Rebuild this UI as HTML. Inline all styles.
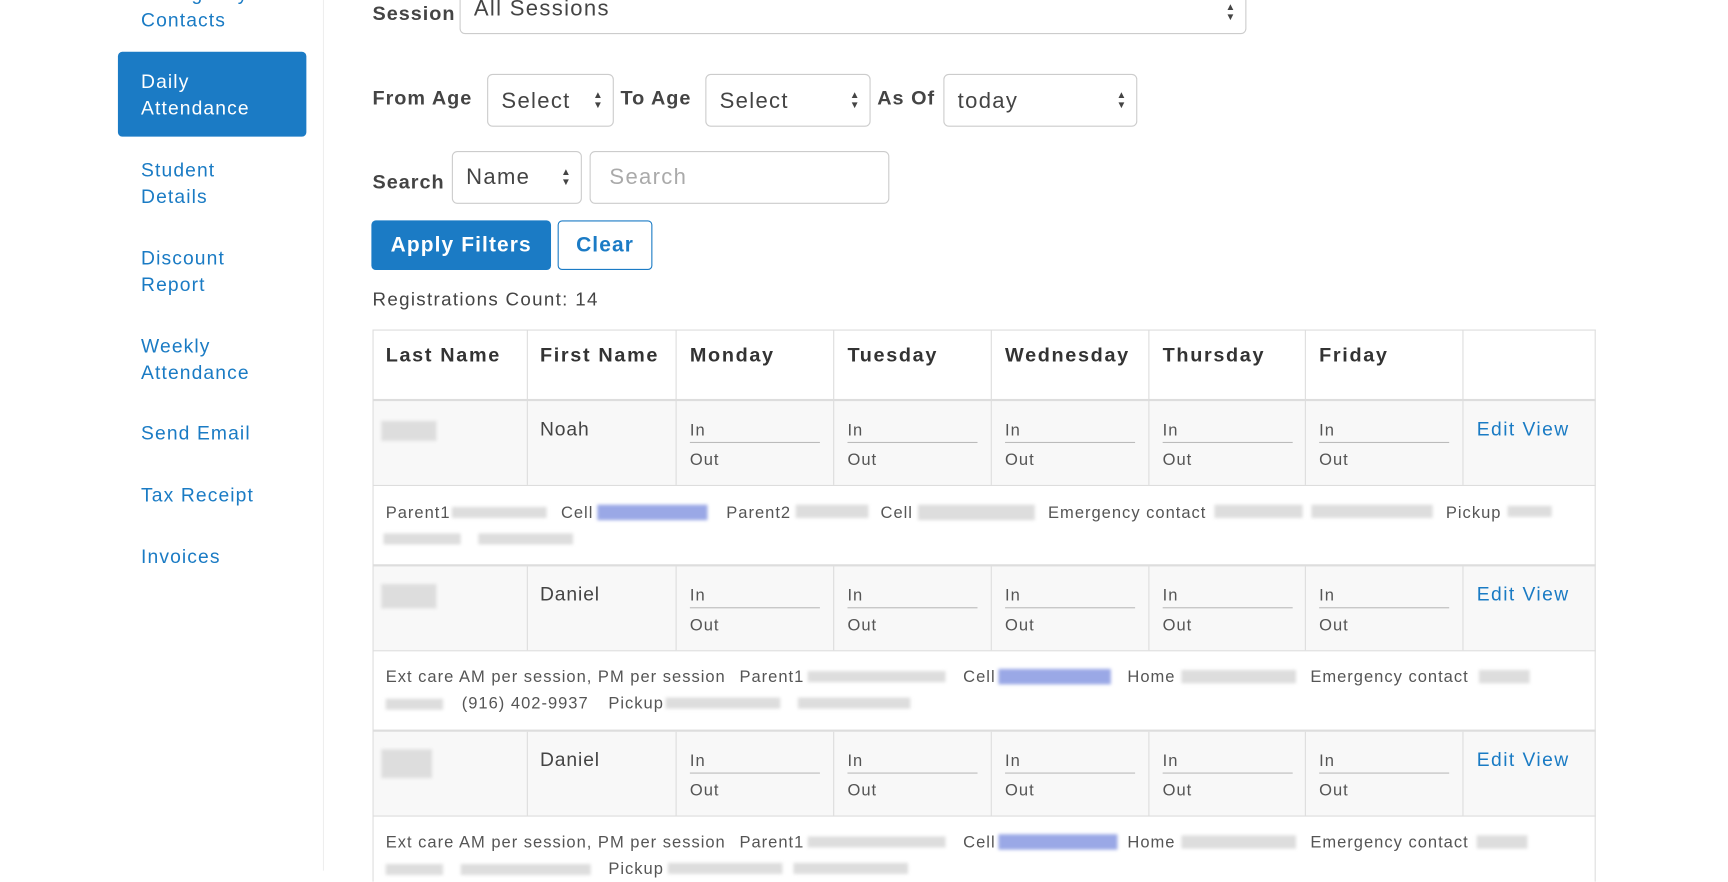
<!DOCTYPE html>
<html><head><meta charset="utf-8">
<style>
html,body{margin:0;padding:0;background:#fff;overflow:hidden;width:1728px;height:882px}
#c{position:absolute;left:0;top:0;width:1568px;height:800px;transform:scale(1.10204);transform-origin:0 0;font-family:"Liberation Sans",sans-serif;color:#333}
.a{position:absolute;white-space:nowrap}
.nav{color:#1a7bc4;font-size:17.5px;line-height:24px;left:128px;letter-spacing:1px}
.lbl{font-weight:bold;font-size:18px;color:#444;letter-spacing:0.9px}
.sel{position:absolute;border:1px solid #ccc;border-radius:5px;background:#fff;box-sizing:border-box;font-size:20px;color:#444;padding-left:12px;letter-spacing:1.2px}
.arr{position:absolute;right:9px;top:50%;transform:translateY(-50%);font-size:9px;line-height:9px;color:#444;text-align:center;letter-spacing:0}
.th{font-weight:bold;font-size:18px;color:#333;letter-spacing:1.5px}
.cell{font-size:15px;color:#555;letter-spacing:0.9px}
.ln{position:absolute;height:1px;background:#bbb}
.b{position:absolute;background:#ddd;filter:blur(1.5px)}
.bb{position:absolute;background:#9aa8e6;filter:blur(1.5px)}
.v{position:absolute;width:1px;background:#ddd}
.h{position:absolute;height:1px;background:#ddd;left:338px;width:1110px}
.ev{font-size:17.5px;color:#1a7bc4;letter-spacing:1.3px;left:1340px}
.fn{left:490px;font-size:17.5px;color:#444;letter-spacing:0.8px}
</style></head><body><div id="c">
<div class="a" style="left:293px;top:0;width:1px;height:790px;background:#eee"></div>
<div class="a nav" style="top:-18px">Emergency</div>
<div class="a nav" style="top:6px">Contacts</div>
<div class="a" style="left:107px;top:47px;width:171px;height:77px;background:#1b7bc5;border-radius:4px"></div>
<div class="a nav" style="top:62px;color:#fff">Daily<br>Attendance</div>
<div class="a nav" style="top:142px">Student<br>Details</div>
<div class="a nav" style="top:222px">Discount<br>Report</div>
<div class="a nav" style="top:302px">Weekly<br>Attendance</div>
<div class="a nav" style="top:381px">Send Email</div>
<div class="a nav" style="top:437px">Tax Receipt</div>
<div class="a nav" style="top:493px">Invoices</div>

<div class="a lbl" style="left:338px;top:2px">Session</div>
<div class="sel" style="left:417px;top:-18px;width:714px;height:49px;line-height:50px">All Sessions<div class="arr" style="top:60%">▲<br>▼</div></div>

<div class="a lbl" style="left:338px;top:79px">From Age</div>
<div class="sel" style="left:442px;top:67px;width:115px;height:48px;line-height:48px">Select<div class="arr">▲<br>▼</div></div>
<div class="a lbl" style="left:563px;top:79px">To Age</div>
<div class="sel" style="left:640px;top:67px;width:150px;height:48px;line-height:48px">Select<div class="arr">▲<br>▼</div></div>
<div class="a lbl" style="left:796px;top:79px">As Of</div>
<div class="sel" style="left:856px;top:67px;width:176px;height:48px;line-height:48px">today<div class="arr">▲<br>▼</div></div>

<div class="a lbl" style="left:338px;top:155px">Search</div>
<div class="sel" style="left:410px;top:137px;width:118px;height:48px;line-height:46px">Name<div class="arr">▲<br>▼</div></div>
<div class="sel" style="left:535px;top:137px;width:272px;height:48px;line-height:46px;color:#aaa;padding-left:17px">Search</div>

<div class="a" style="left:337px;top:200px;width:163px;height:45px;background:#1b7bc5;border-radius:4px;color:#fff;font-weight:bold;font-size:19px;line-height:45px;text-align:center;letter-spacing:1px">Apply Filters</div>
<div class="a" style="left:506px;top:200px;width:86px;height:45px;border:1px solid #1b7bc5;box-sizing:border-box;border-radius:4px;color:#1b7bc5;font-weight:bold;font-size:19px;line-height:43px;text-align:center;letter-spacing:1px">Clear</div>

<div class="a" style="left:338px;top:262px;font-size:17px;color:#444;letter-spacing:1.2px">Registrations Count: 14</div>

<div class="a" style="left:338px;top:364px;width:1110px;height:76px;background:#f8f8f8"></div>
<div class="a" style="left:338px;top:514px;width:1110px;height:76px;background:#f8f8f8"></div>
<div class="a" style="left:338px;top:664px;width:1110px;height:76px;background:#f8f8f8"></div>
<div class="v" style="left:338px;top:299px;height:501px"></div>
<div class="v" style="left:1447px;top:299px;height:501px"></div>
<div class="h" style="top:299px"></div>
<div class="h" style="top:362px;height:2px"></div>
<div class="h" style="top:440px"></div>
<div class="h" style="top:512px;height:2px"></div>
<div class="h" style="top:590px"></div>
<div class="h" style="top:662px;height:2px"></div>
<div class="h" style="top:740px"></div>
<div class="v" style="left:478px;top:299px;height:141px"></div><div class="v" style="left:613px;top:299px;height:141px"></div><div class="v" style="left:756px;top:299px;height:141px"></div><div class="v" style="left:899px;top:299px;height:141px"></div><div class="v" style="left:1042px;top:299px;height:141px"></div><div class="v" style="left:1184px;top:299px;height:141px"></div><div class="v" style="left:1327px;top:299px;height:141px"></div>
<div class="v" style="left:478px;top:514px;height:76px"></div><div class="v" style="left:613px;top:514px;height:76px"></div><div class="v" style="left:756px;top:514px;height:76px"></div><div class="v" style="left:899px;top:514px;height:76px"></div><div class="v" style="left:1042px;top:514px;height:76px"></div><div class="v" style="left:1184px;top:514px;height:76px"></div><div class="v" style="left:1327px;top:514px;height:76px"></div>
<div class="v" style="left:478px;top:664px;height:76px"></div><div class="v" style="left:613px;top:664px;height:76px"></div><div class="v" style="left:756px;top:664px;height:76px"></div><div class="v" style="left:899px;top:664px;height:76px"></div><div class="v" style="left:1042px;top:664px;height:76px"></div><div class="v" style="left:1184px;top:664px;height:76px"></div><div class="v" style="left:1327px;top:664px;height:76px"></div>

<div class="a th" style="left:350px;top:312px">Last Name</div>
<div class="a th" style="left:490px;top:312px">First Name</div>
<div class="a th" style="left:626px;top:312px">Monday</div>
<div class="a th" style="left:769px;top:312px">Tuesday</div>
<div class="a th" style="left:912px;top:312px">Wednesday</div>
<div class="a th" style="left:1055px;top:312px">Thursday</div>
<div class="a th" style="left:1197px;top:312px">Friday</div>

<div class="a fn" style="top:379px">Noah</div>
<div class="a fn" style="top:529px">Daniel</div>
<div class="a fn" style="top:679px">Daniel</div>
<div class="b" style="left:346px;top:382px;width:50px;height:18px"></div>
<div class="b" style="left:346px;top:530px;width:50px;height:22px"></div>
<div class="b" style="left:346px;top:680px;width:46px;height:26px"></div>

<div class="a ev" style="top:379px">Edit View</div>
<div class="a ev" style="top:529px">Edit View</div>
<div class="a ev" style="top:679px">Edit View</div>

<div class="a cell" style="left:626px;top:382px">In</div><div class="ln" style="left:626px;top:401px;width:118px"></div><div class="a cell" style="left:626px;top:409px">Out</div>
<div class="a cell" style="left:769px;top:382px">In</div><div class="ln" style="left:769px;top:401px;width:118px"></div><div class="a cell" style="left:769px;top:409px">Out</div>
<div class="a cell" style="left:912px;top:382px">In</div><div class="ln" style="left:912px;top:401px;width:118px"></div><div class="a cell" style="left:912px;top:409px">Out</div>
<div class="a cell" style="left:1055px;top:382px">In</div><div class="ln" style="left:1055px;top:401px;width:118px"></div><div class="a cell" style="left:1055px;top:409px">Out</div>
<div class="a cell" style="left:1197px;top:382px">In</div><div class="ln" style="left:1197px;top:401px;width:118px"></div><div class="a cell" style="left:1197px;top:409px">Out</div>

<div class="a cell" style="left:626px;top:532px">In</div><div class="ln" style="left:626px;top:551px;width:118px"></div><div class="a cell" style="left:626px;top:559px">Out</div>
<div class="a cell" style="left:769px;top:532px">In</div><div class="ln" style="left:769px;top:551px;width:118px"></div><div class="a cell" style="left:769px;top:559px">Out</div>
<div class="a cell" style="left:912px;top:532px">In</div><div class="ln" style="left:912px;top:551px;width:118px"></div><div class="a cell" style="left:912px;top:559px">Out</div>
<div class="a cell" style="left:1055px;top:532px">In</div><div class="ln" style="left:1055px;top:551px;width:118px"></div><div class="a cell" style="left:1055px;top:559px">Out</div>
<div class="a cell" style="left:1197px;top:532px">In</div><div class="ln" style="left:1197px;top:551px;width:118px"></div><div class="a cell" style="left:1197px;top:559px">Out</div>

<div class="a cell" style="left:626px;top:682px">In</div><div class="ln" style="left:626px;top:701px;width:118px"></div><div class="a cell" style="left:626px;top:709px">Out</div>
<div class="a cell" style="left:769px;top:682px">In</div><div class="ln" style="left:769px;top:701px;width:118px"></div><div class="a cell" style="left:769px;top:709px">Out</div>
<div class="a cell" style="left:912px;top:682px">In</div><div class="ln" style="left:912px;top:701px;width:118px"></div><div class="a cell" style="left:912px;top:709px">Out</div>
<div class="a cell" style="left:1055px;top:682px">In</div><div class="ln" style="left:1055px;top:701px;width:118px"></div><div class="a cell" style="left:1055px;top:709px">Out</div>
<div class="a cell" style="left:1197px;top:682px">In</div><div class="ln" style="left:1197px;top:701px;width:118px"></div><div class="a cell" style="left:1197px;top:709px">Out</div>

<div class="a cell" style="left:350px;top:457px">Parent1</div><div class="b" style="left:410px;top:460px;width:86px;height:10px"></div>
<div class="a cell" style="left:509px;top:457px">Cell</div><div class="bb" style="left:542px;top:458px;width:100px;height:14px"></div>
<div class="a cell" style="left:659px;top:457px">Parent2</div><div class="b" style="left:722px;top:458px;width:66px;height:12px"></div>
<div class="a cell" style="left:799px;top:457px">Cell</div><div class="b" style="left:833px;top:458px;width:106px;height:14px"></div>
<div class="a cell" style="left:951px;top:457px">Emergency contact</div><div class="b" style="left:1102px;top:458px;width:80px;height:12px"></div><div class="b" style="left:1190px;top:458px;width:110px;height:12px"></div>
<div class="a cell" style="left:1312px;top:457px">Pickup</div><div class="b" style="left:1368px;top:459px;width:40px;height:10px"></div>
<div class="b" style="left:348px;top:484px;width:70px;height:10px"></div><div class="b" style="left:434px;top:484px;width:86px;height:10px"></div>

<div class="a cell" style="left:350px;top:606px">Ext care AM per session, PM per session</div>
<div class="a cell" style="left:671px;top:606px">Parent1</div><div class="b" style="left:733px;top:609px;width:125px;height:10px"></div>
<div class="a cell" style="left:874px;top:606px">Cell</div><div class="bb" style="left:906px;top:607px;width:102px;height:14px"></div>
<div class="a cell" style="left:1023px;top:606px">Home</div><div class="b" style="left:1072px;top:608px;width:104px;height:12px"></div>
<div class="a cell" style="left:1189px;top:606px">Emergency contact</div><div class="b" style="left:1342px;top:608px;width:46px;height:12px"></div>
<div class="b" style="left:350px;top:634px;width:52px;height:10px"></div>
<div class="a cell" style="left:419px;top:630px">(916) 402-9937</div>
<div class="a cell" style="left:552px;top:630px">Pickup</div><div class="b" style="left:604px;top:633px;width:104px;height:10px"></div><div class="b" style="left:724px;top:633px;width:102px;height:10px"></div>

<div class="a cell" style="left:350px;top:756px">Ext care AM per session, PM per session</div>
<div class="a cell" style="left:671px;top:756px">Parent1</div><div class="b" style="left:733px;top:759px;width:125px;height:10px"></div>
<div class="a cell" style="left:874px;top:756px">Cell</div><div class="bb" style="left:906px;top:757px;width:108px;height:14px"></div>
<div class="a cell" style="left:1023px;top:756px">Home</div><div class="b" style="left:1072px;top:758px;width:104px;height:12px"></div>
<div class="a cell" style="left:1189px;top:756px">Emergency contact</div><div class="b" style="left:1340px;top:758px;width:46px;height:12px"></div>
<div class="b" style="left:350px;top:784px;width:52px;height:10px"></div><div class="b" style="left:418px;top:784px;width:118px;height:10px"></div>
<div class="a cell" style="left:552px;top:780px">Pickup</div><div class="b" style="left:606px;top:783px;width:104px;height:10px"></div><div class="b" style="left:720px;top:783px;width:104px;height:10px"></div>
</div></body></html>
